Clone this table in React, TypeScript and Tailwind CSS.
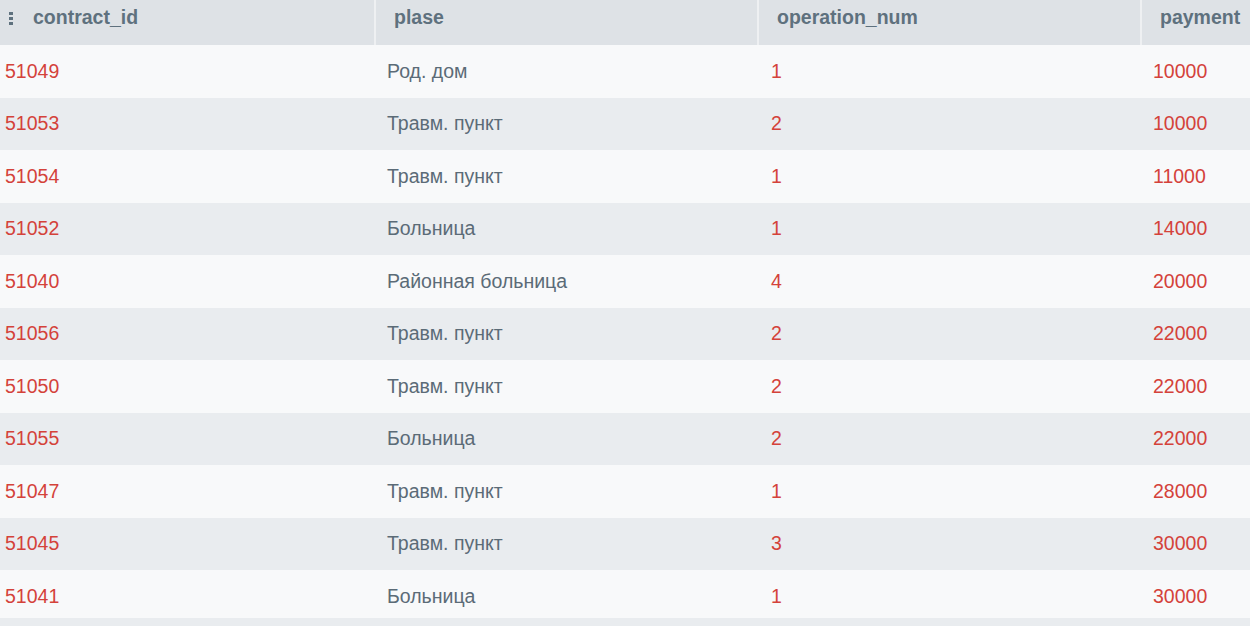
const rows: [string, string, string, string][] = [
  ["51049", "Род. дом", "1", "10000"],
  ["51053", "Травм. пункт", "2", "10000"],
  ["51054", "Травм. пункт", "1", "11000"],
  ["51052", "Больница", "1", "14000"],
  ["51040", "Районная больница", "4", "20000"],
  ["51056", "Травм. пункт", "2", "22000"],
  ["51050", "Травм. пункт", "2", "22000"],
  ["51055", "Больница", "2", "22000"],
  ["51047", "Травм. пункт", "1", "28000"],
  ["51045", "Травм. пункт", "3", "30000"],
  ["51041", "Больница", "1", "30000"],
];

const cols = "grid grid-cols-[374px_383px_383px_1fr]";

export default function App() {
  return (
    <div
      className="w-[1250px] h-[626px] overflow-hidden flex flex-col bg-[#e9ecef] text-[19.5px]"
      style={{ fontFamily: '"Liberation Sans", Arial, sans-serif' }}
    >
      <div className={`${cols} h-[45px] shrink-0 bg-[#dee2e6] font-bold text-[#5e717e]`}>
        <div className="flex items-center pl-[8px] gap-[19px]">
          <svg width="6" height="14" viewBox="0 0 6 14" className="mb-[8px]">
            <rect x="1" y="0" width="4" height="3" fill="#5e717e" />
            <rect x="1" y="5" width="4" height="3" fill="#5e717e" />
            <rect x="1" y="10" width="4" height="3" fill="#5e717e" />
          </svg>
          <span className="pb-[9px]">contract_id</span>
        </div>
        <div className="flex items-center border-l-2 border-[#eef0f2] pl-[18px] pb-[9px]">plase</div>
        <div className="flex items-center border-l-2 border-[#eef0f2] pl-[18px] pb-[9px]">operation_num</div>
        <div className="flex items-center border-l-2 border-[#eef0f2] pl-[18px] pb-[9px]">payment</div>
      </div>
      <div className="flex-1 overflow-hidden">
        {rows.map((r, i) => (
          <div
            key={i}
            className={`${cols} h-[52.5px] items-center ${i % 2 === 0 ? "bg-[#f8f9fa]" : "bg-[#e9ecef]"}`}
          >
            <div className="pl-[5px] text-[#d4423a]">{r[0]}</div>
            <div className="pl-[13px] text-[#5b6b77]">{r[1]}</div>
            <div className="pl-[14px] text-[#d4423a]">{r[2]}</div>
            <div className="pl-[13px] text-[#d4423a]">{r[3]}</div>
          </div>
        ))}
      </div>
      <div className="h-[8px] shrink-0 bg-[#e9ecef]" />
    </div>
  );
}
